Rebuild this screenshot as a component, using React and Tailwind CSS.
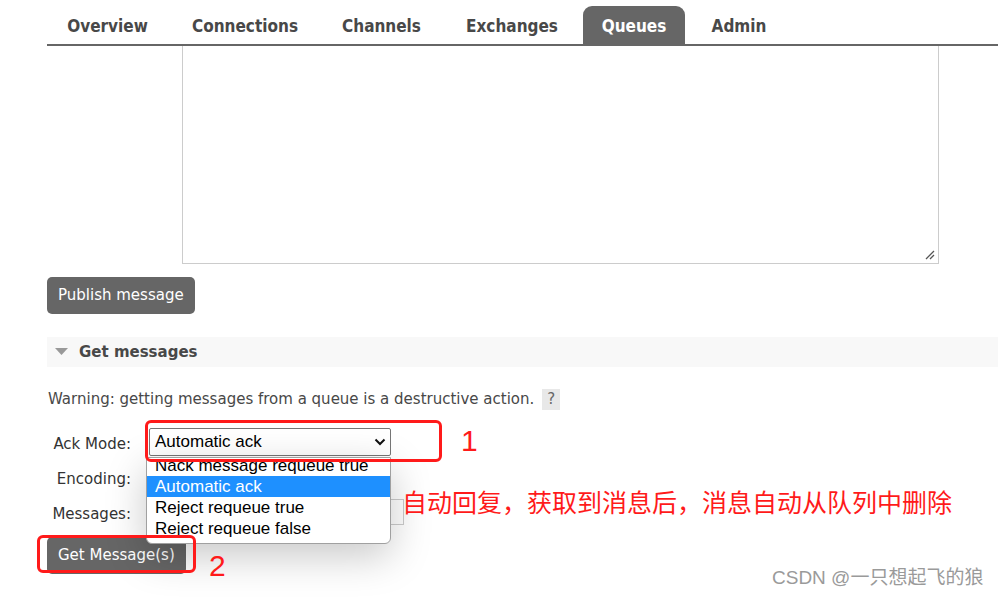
import React from "react";

const tabs = [
  { label: "Overview", w: "w-[121px]" },
  { label: "Connections", w: "w-[144px]" },
  { label: "Channels", w: "w-[119px]" },
  { label: "Exchanges", w: "w-[132px]" },
  { label: "Queues", w: "w-[102px]", active: true },
  { label: "Admin", w: "w-[98px]" },
];

const body = { fontFamily: '"DejaVu Sans", Verdana, sans-serif' };
const arial = { fontFamily: '"Liberation Sans", Arial, sans-serif' };
const cjk = { fontFamily: '"Noto Sans CJK SC", "Noto Sans", sans-serif' };

export default function App() {
  return (
    <div className="relative w-[998px] h-[597px] overflow-hidden bg-white text-[#484848]" style={body}>
      {/* top tabs */}
      <div className="pl-[47px]">
        <div
          className="flex items-end gap-[5px] h-[46px] border-b-2 border-[#666]"
          style={{ fontFamily: '"DejaVu Sans Condensed", "DejaVu Sans", sans-serif' }}
        >
          {tabs.map((t) => (
            <div
              key={t.label}
              className={`${t.w} h-[38px] flex items-center justify-center pt-[4px] rounded-t-[9px] text-[17px] font-bold ${
                t.active ? "bg-[#666] text-white" : "text-[#484848]"
              }`}
            >
              {t.label}
            </div>
          ))}
        </div>
      </div>

      <div className="pl-[47px]">
        {/* textarea (scrolled) */}
        <div className="relative ml-[135px] w-[757px] h-[218px] border-l border-r border-b border-[#ccc]">
          <svg className="absolute right-[3px] bottom-[3px]" width="10" height="10" viewBox="0 0 10 10">
            <path d="M9 1 L1 9 M9 5 L5 9" stroke="#555" strokeWidth="1.3" />
          </svg>
        </div>

        <button className="mt-[13px] h-[37px] px-[11px] rounded-[5px] bg-[#666] text-white text-[15px]">
          Publish message
        </button>

        {/* section header */}
        <div className="mt-[23px] h-[30px] bg-[#f8f8f8] flex items-center">
          <svg className="ml-[8px]" width="13" height="8" viewBox="0 0 13 8">
            <path d="M0 0 H13 L6.5 7 Z" fill="#999" />
          </svg>
          <span className="ml-[11px] text-[15px] font-bold text-[#484848]">Get messages</span>
        </div>

        <div className="mt-[22px] flex items-center h-[21px]">
          <span className="ml-[1px] text-[15px] text-[#484848]">
            Warning: getting messages from a queue is a destructive action.
          </span>
          <span className="ml-[8px] w-[18px] h-[21px] bg-[#e8e8e8] flex items-center justify-center text-[15px] text-[#666]">
            ?
          </span>
        </div>

        {/* form */}
        <div className="mt-[14px] flex flex-col">
          <div className="relative flex items-center h-[35px]">
            <span className="w-[85px] pt-[5px] pr-[1px] text-right text-[15px] text-[#333]">Ack Mode:</span>
            <div
              className="ml-[17px] w-[242px] h-[28px] border border-[#767676] rounded-[2px] flex items-center justify-between pl-[5px] pr-[4px] text-[17px] text-black"
              style={arial}
            >
              Automatic ack
              <svg width="12" height="8" viewBox="0 0 12 8">
                <path d="M1.5 1.5 L6 6 L10.5 1.5" fill="none" stroke="#111" strokeWidth="2" />
              </svg>
            </div>

            {/* open options list */}
            <div
              className="absolute z-20 left-[99px] top-[33px] w-[245px] h-[87px] bg-white border border-[#a0a0a0] rounded-b-[6px] overflow-hidden shadow-[0_12px_40px_rgba(0,0,0,0.22)] text-[17px] text-black"
              style={arial}
            >
              <div className="-mt-[1px]">
                <div className="h-[21px] leading-[21px] pl-[8px] -mt-[3px]">Nack message requeue true</div>
                <div className="h-[21px] leading-[21px] pl-[8px] bg-[#1e90ff] text-white">Automatic ack</div>
                <div className="h-[21px] leading-[21px] pl-[8px]">Reject requeue true</div>
                <div className="h-[21px] leading-[21px] pl-[8px]">Reject requeue false</div>
              </div>
            </div>
          </div>
          <div className="flex items-center h-[35px]">
            <span className="w-[85px] pt-[5px] pr-[1px] text-right text-[15px] text-[#333]">Encoding:</span>
            <div className="ml-[17px] w-[200px] h-[28px] border border-[#767676] rounded-[2px]" />
          </div>
          <div className="flex items-center h-[35px]">
            <span className="w-[85px] pt-[5px] pr-[1px] text-right text-[15px] text-[#333]">Messages:</span>
            <div className="ml-[17px] w-[255px] h-[26px] border border-[#ccc]" />
          </div>
        </div>

        <button className="mt-[8px] h-[37px] px-[11px] rounded-[5px] bg-[#666] text-white text-[15px]">
          Get Message(s)
        </button>
      </div>

      {/* annotations */}
      <div className="absolute left-[145px] top-[420px] w-[297px] h-[42px] border-[3px] border-[#ff1a1a] rounded-[6px] z-30" />
      <div className="absolute left-[461px] top-[423px] text-[30px] leading-[36px] text-[#ff1a1a] z-30" style={arial}>
        1
      </div>
      <div className="absolute left-[402px] top-[485px] text-[25px] leading-[32px] text-[#ff1a1a] z-30 whitespace-nowrap" style={cjk}>
        自动回复，获取到消息后，消息自动从队列中删除
      </div>
      <div className="absolute left-[37px] top-[535px] w-[159px] h-[38px] border-[3px] border-[#ff1a1a] rounded-[6px] z-30" />
      <div className="absolute left-[209px] top-[548px] text-[30px] leading-[36px] text-[#ff1a1a] z-30" style={arial}>
        2
      </div>

      <div className="absolute left-[772px] top-[565px] text-[19px] leading-[26px] text-[#9a9a9a] whitespace-nowrap" style={{ fontFamily: '"Liberation Sans", "Noto Sans CJK SC", sans-serif' }}>
        CSDN @一只想起飞的狼
      </div>
    </div>
  );
}
